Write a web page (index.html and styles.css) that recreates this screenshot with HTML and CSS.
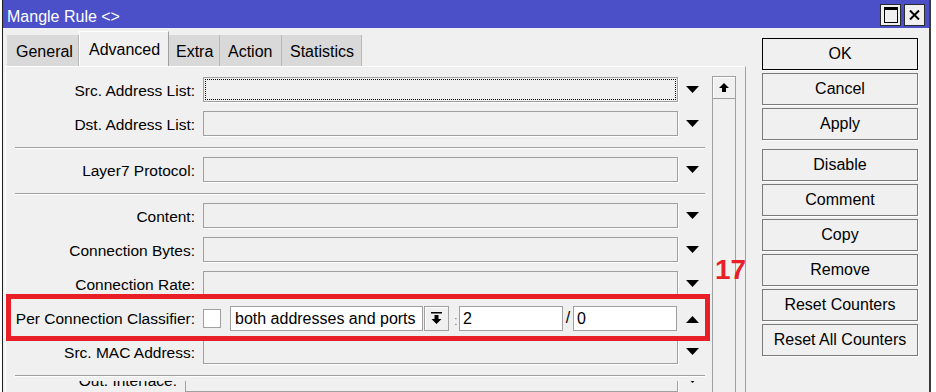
FILE: index.html
```html
<!DOCTYPE html>
<html>
<head>
<meta charset="utf-8">
<title>Mangle Rule</title>
<link rel="stylesheet" href="styles.css">
</head>
<body>
<div class="window">
  <div class="titlebar">
    <span class="title">Mangle Rule &lt;&gt;</span>
    <div class="wbtns">
      <div class="wbtn"><svg width="14" height="16" viewBox="0 0 14 16"><rect x="0.5" y="0.5" width="13" height="15" fill="none" stroke="#000"/><rect x="0" y="0" width="14" height="3" fill="#000"/></svg></div>
      <div class="wbtn"><svg width="11" height="10" viewBox="0 0 11 10"><path d="M1 0.5 L10 9.5 M10 0.5 L1 9.5" stroke="#000" stroke-width="2" fill="none"/></svg></div>
    </div>
  </div>
  <div class="main">
    <div class="left">
      <div class="tabs">
        <div class="tab t-general">General</div>
        <div class="tab active t-advanced">Advanced</div>
        <div class="tab t-extra">Extra</div>
        <div class="tab t-action">Action</div>
        <div class="tab t-stats">Statistics</div>
      </div>
      <div class="panel">
        <div class="form">
          <div class="row">
            <div class="label">Src. Address List:</div>
            <div class="field focus"></div>
            <div class="dd"><svg width="13" height="7" viewBox="0 0 13 7"><polygon points="0,0 13,0 6.5,7" fill="#000"/></svg></div>
          </div>
          <div class="row">
            <div class="label">Dst. Address List:</div>
            <div class="field"></div>
            <div class="dd"><svg width="13" height="7" viewBox="0 0 13 7"><polygon points="0,0 13,0 6.5,7" fill="#000"/></svg></div>
          </div>
          <div class="sep"></div>
          <div class="row">
            <div class="label">Layer7 Protocol:</div>
            <div class="field"></div>
            <div class="dd"><svg width="13" height="7" viewBox="0 0 13 7"><polygon points="0,0 13,0 6.5,7" fill="#000"/></svg></div>
          </div>
          <div class="sep"></div>
          <div class="row">
            <div class="label">Content:</div>
            <div class="field"></div>
            <div class="dd"><svg width="13" height="7" viewBox="0 0 13 7"><polygon points="0,0 13,0 6.5,7" fill="#000"/></svg></div>
          </div>
          <div class="row">
            <div class="label">Connection Bytes:</div>
            <div class="field"></div>
            <div class="dd"><svg width="13" height="7" viewBox="0 0 13 7"><polygon points="0,0 13,0 6.5,7" fill="#000"/></svg></div>
          </div>
          <div class="row">
            <div class="label">Connection Rate:</div>
            <div class="field"></div>
            <div class="dd"><svg width="13" height="7" viewBox="0 0 13 7"><polygon points="0,0 13,0 6.5,7" fill="#000"/></svg></div>
          </div>
          <div class="row pcc">
            <div class="label">Per Connection Classifier:</div>
            <div class="check"></div>
            <div class="select">both addresses and ports</div>
            <div class="selbtn"><svg width="11" height="12" viewBox="0 0 11 12"><rect x="0" y="0" width="11" height="1.5" fill="#000"/><polygon points="3.5,3 7.5,3 7.5,7 10.5,7 5.5,12 0.5,7 3.5,7" fill="#000"/></svg></div>
            <div class="colon">:</div>
            <div class="input">2</div>
            <div class="slash">/</div>
            <div class="input">0</div>
            <div class="dd"><svg width="13" height="7" viewBox="0 0 13 7"><polygon points="0,7 13,7 6.5,0" fill="#000"/></svg></div>
          </div>
          <div class="row">
            <div class="label">Src. MAC Address:</div>
            <div class="field"></div>
            <div class="dd"><svg width="13" height="7" viewBox="0 0 13 7"><polygon points="0,0 13,0 6.5,7" fill="#000"/></svg></div>
          </div>
          <div class="sep"></div>
          <div class="clip">
            <div class="row out">
              <div class="label">Out. Interface:</div>
              <div class="field"></div>
              <div class="dd"><svg width="13" height="7" viewBox="0 0 13 7"><polygon points="0,0 13,0 6.5,7" fill="#000"/></svg></div>
            </div>
          </div>
        </div>
        <div class="scrollbar">
          <div class="sb-up"><svg width="10" height="9" viewBox="0 0 10 9"><polygon points="5,0 10,5 7,5 7,9 3,9 3,5 0,5" fill="#000"/></svg></div>
          <div class="sb-track"></div>
        </div>
      </div>
    </div>
    <div class="buttons">
      <div class="btn default">OK</div>
      <div class="btn">Cancel</div>
      <div class="btn">Apply</div>
      <div class="btn group">Disable</div>
      <div class="btn">Comment</div>
      <div class="btn">Copy</div>
      <div class="btn">Remove</div>
      <div class="btn">Reset Counters</div>
      <div class="btn">Reset All Counters</div>
    </div>
  </div>
  <div class="highlight"></div>
  <div class="marker">17</div>
</div>
</body>
</html>
```

FILE: styles.css
```css
html, body {
  margin: 0;
  padding: 0;
}
body {
  width: 936px;
  height: 392px;
  overflow: hidden;
  background: #ffffff;
  font-family: "Liberation Sans", Arial, sans-serif;
  color: #000;
}
.window {
  position: relative;
  margin-left: 2px;
  width: 926px;
  height: 392px;
  border-left: 1px solid #1e1e1e;
  border-right: 2px solid #3a3a3a;
  background: #f0f0f0;
  overflow: hidden;
}
.titlebar {
  height: 28px;
  background: #4c50c8;
  display: flex;
  justify-content: space-between;
  align-items: flex-start;
  padding-left: 4px;
  color: #fff;
}
.title {
  font-size: 16px;
  line-height: 17px;
  margin-top: 8px;
}
.wbtns {
  display: flex;
  gap: 3px;
  margin-top: 4px;
  margin-right: 4px;
}
.wbtn {
  width: 21px;
  height: 22px;
  box-sizing: border-box;
  border: 1px solid #2a2a2a;
  background: #f0f0f0;
  display: flex;
  align-items: center;
  justify-content: center;
}
.main {
  display: flex;
  height: 364px;
}
.left {
  width: 743px;
}
.tabs {
  height: 38px;
  display: flex;
  align-items: flex-end;
  padding-left: 4px;
}
.tab {
  height: 31px;
  box-sizing: border-box;
  background: #d9d9d9;
  font-size: 16px;
  line-height: 19px;
  padding-top: 7px;
  border-right: 1px solid #b8b8b8;
  white-space: nowrap;
}
.tab.active {
  height: 35px;
  background: #f0f0f0;
  border-top: 1px solid #fff;
  border-left: 1px solid #fff;
  border-right: 1px solid #a0a0a0;
  padding-top: 8px;
}
.t-general { width: 72px; padding-left: 9px; }
.t-advanced { width: 90px; padding-left: 9px; }
.t-extra { width: 51px; padding-left: 7px; }
.t-action { width: 62px; padding-left: 8px; }
.t-stats { width: 80px; padding-left: 8px; }

.panel {
  margin-left: 2px;
  width: 741px;
  height: 326px;
  box-sizing: border-box;
  border-top: 1px solid #fff;
  border-left: 1px solid #fff;
  border-right: 1px solid #a0a0a0;
  display: flex;
}
.form {
  width: 706px;
  padding-top: 6px;
}
.row {
  height: 34px;
  box-sizing: border-box;
  padding-top: 4px;
  display: flex;
  align-items: flex-start;
}
.label {
  width: 189px;
  margin-right: 8px;
  text-align: right;
  font-size: 15.5px;
  line-height: 27px;
  white-space: nowrap;
}
.field {
  width: 475px;
  height: 25px;
  box-sizing: border-box;
  border: 1px solid #a0a0a0;
  box-shadow: 1px 1px 0 #fff;
  background: #f0f0f0;
}
.field.focus {
  outline: 1px dotted #000;
  outline-offset: -3px;
}
.dd {
  height: 25px;
  margin-left: 8px;
  display: flex;
  align-items: center;
}
.sep {
  margin: 6px 7px 4px 9px;
  border-top: 1px solid #a0a0a0;
  border-bottom: 1px solid #fff;
}
.pcc {
  align-items: center;
  height: 34px;
  padding-top: 0;
}
.pcc .label {
  margin-top: 1px;
}
.check {
  width: 18px;
  height: 19px;
  box-sizing: border-box;
  background: #fff;
  border: 1px solid #a0a0a0;
  margin-top: 1px;
}
.select {
  margin-left: 9px;
  width: 193px;
  height: 25px;
  box-sizing: border-box;
  background: #fff;
  border: 1px solid #a0a0a0;
  font-size: 16px;
  line-height: 23px;
  padding-left: 4px;
  white-space: nowrap;
  overflow: hidden;
}
.selbtn {
  margin-left: 1px;
  width: 25px;
  height: 25px;
  box-sizing: border-box;
  border: 1px solid #a0a0a0;
  box-shadow: inset 1px 1px 0 #fff;
  display: flex;
  align-items: center;
  justify-content: center;
}
.colon {
  width: 10px;
  padding-left: 5px;
  box-sizing: border-box;
  font-size: 13px;
  color: #808080;
  margin-top: 4px;
}
.input {
  width: 104px;
  height: 25px;
  box-sizing: border-box;
  background: #fff;
  border: 1px solid #a0a0a0;
  font-size: 16px;
  line-height: 23px;
  padding-left: 3px;
}
.slash {
  width: 10px;
  text-align: center;
  font-size: 16px;
}
.pcc .dd {
  margin-left: 9px;
  margin-top: 2px;
}
.clip {
  height: 15px;
  overflow: hidden;
}
.row.out {
  margin-top: -14px;
  padding-top: 0;
}
.row.out .label {
  width: 171px;
}
.row.out .field {
  width: 493px;
}
.scrollbar {
  width: 24px;
  margin-top: 9px;
  display: flex;
  flex-direction: column;
}
.sb-up {
  height: 23px;
  box-sizing: border-box;
  border: 1px solid #a0a0a0;
  box-shadow: inset 1px 1px 0 #fff;
  display: flex;
  align-items: center;
  justify-content: center;
}
.sb-track {
  flex: 1;
  border-left: 1px solid #a0a0a0;
  border-right: 1px solid #a0a0a0;
}
.buttons {
  padding: 10px 0 0 16px;
  display: flex;
  flex-direction: column;
  gap: 3px;
}
.btn {
  width: 156px;
  height: 32px;
  box-sizing: border-box;
  border: 1px solid #7a7a7a;
  box-shadow: 1px 1px 0 #fff;
  background: #f0f0f0;
  font-size: 16px;
  display: flex;
  align-items: center;
  justify-content: center;
  white-space: nowrap;
}
.btn.default {
  border-color: #000;
}
.btn.group {
  margin-top: 6px;
}
.highlight {
  position: absolute;
  left: 3px;
  top: 294px;
  width: 704px;
  height: 47px;
  box-sizing: border-box;
  border: 5px solid #e81f27;
}
.marker {
  position: absolute;
  left: 712px;
  top: 256px;
  font-size: 28px;
  line-height: 28px;
  font-weight: bold;
  color: #e81f27;
}
```
